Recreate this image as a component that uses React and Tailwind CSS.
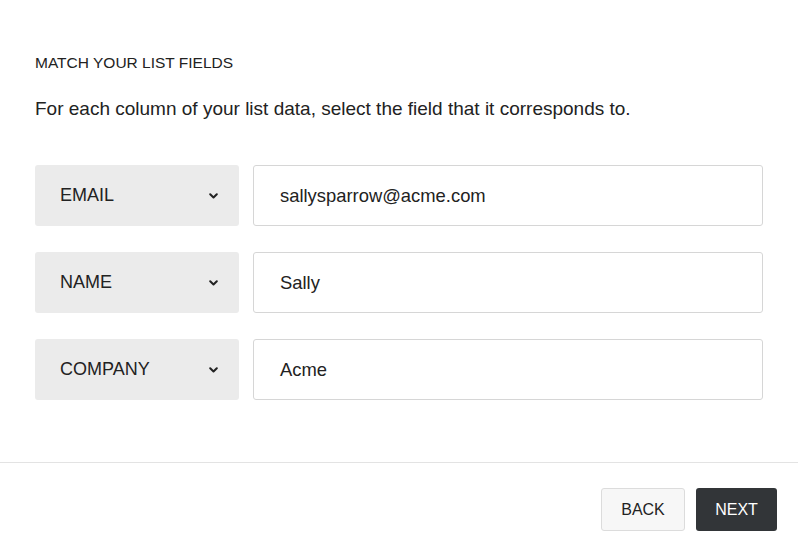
export default function App() {
  const rows = [
    { field: "EMAIL", value: "sallysparrow@acme.com" },
    { field: "NAME", value: "Sally" },
    { field: "COMPANY", value: "Acme" },
  ];

  return (
    <div
      className="flex h-[550px] w-[798px] flex-col bg-white text-[#222]"
      style={{ fontFamily: '"Liberation Sans", Arial, sans-serif' }}
    >
      <div className="px-[35px] pt-[54px]">
        <div className="text-[15.5px] leading-[17px] text-[#222]">MATCH YOUR LIST FIELDS</div>
        <p className="mt-[27px] text-[19px] leading-[22px] text-[#222]">
          For each column of your list data, select the field that it corresponds to.
        </p>

        <div className="mt-[45px] flex w-[728px] flex-col gap-[26px]">
          {rows.map((row) => (
            <div key={row.field} className="flex gap-[14px]">
              <div className="flex h-[61px] w-[204px] items-center justify-between rounded-[3px] bg-[#ebebeb] pl-[25px] pr-[21px] text-[18px]">
                <span>{row.field}</span>
                <svg width="9" height="6" viewBox="0 0 9 6" fill="none">
                  <path d="M1.2 1.2 L4.5 4.5 L7.8 1.2" stroke="#222" strokeWidth="2" strokeLinecap="round" strokeLinejoin="round" />
                </svg>
              </div>
              <div className="flex h-[61px] flex-1 items-center rounded-[3px] border border-[#d6d6d6] bg-white pl-[26px] text-[18.4px]">
                {row.value}
              </div>
            </div>
          ))}
        </div>
      </div>

      <div className="mt-auto border-t border-[#e3e3e3]">
        <div className="flex justify-end gap-[11px] pb-[19px] pr-[21px] pt-[25px]">
          <button className="h-[43px] w-[84px] rounded-[3px] border border-[#dcdcdc] bg-[#f7f7f7] text-[16px] text-[#222]">
            BACK
          </button>
          <button className="h-[43px] w-[81px] rounded-[3px] bg-[#323538] text-[16px] text-white">
            NEXT
          </button>
        </div>
      </div>
    </div>
  );
}
